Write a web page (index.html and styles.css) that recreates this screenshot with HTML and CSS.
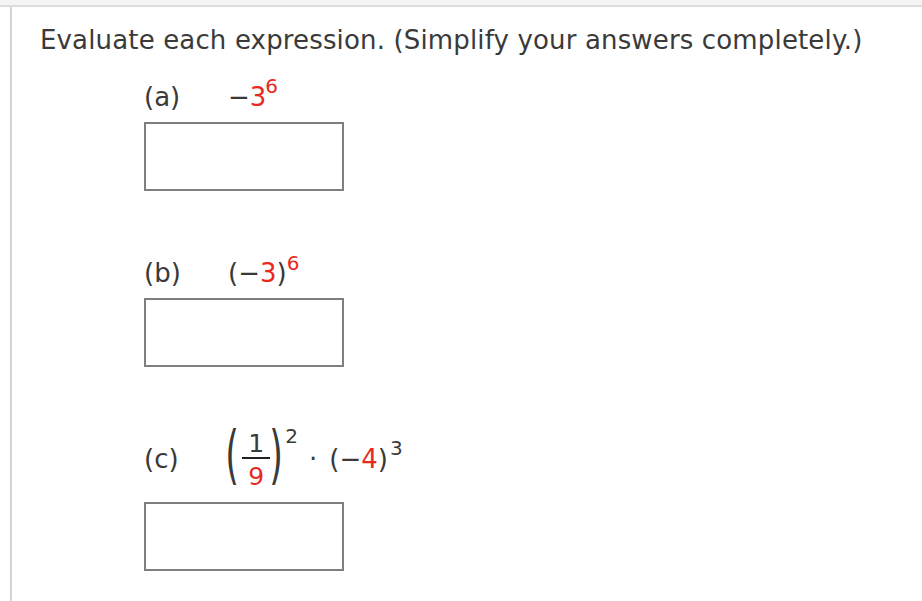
FILE: index.html
```html
<!DOCTYPE html>
<html lang="en">
<head>
<meta charset="utf-8">
<title>Evaluate each expression</title>
<link rel="stylesheet" href="styles.css">
</head>
<body>
<div class="topbar"></div>
<div class="panel">
  <p class="question">Evaluate each expression. (Simplify your answers completely.)</p>

  <div class="part part-a">
    <div class="prompt">
      <span class="label">(a)</span>
      <span class="expr">&minus;<span class="red">3</span><sup class="red">6</sup></span>
    </div>
    <div class="answer"></div>
  </div>

  <div class="part part-b">
    <div class="prompt">
      <span class="label">(b)</span>
      <span class="expr">(&minus;<span class="red">3</span>)<sup class="red sup-b">6</sup></span>
    </div>
    <div class="answer"></div>
  </div>

  <div class="part part-c">
    <div class="prompt">
      <span class="label">(c)</span>
      <span class="expr"><span class="bigparen">(</span><span class="frac"><span class="num">1</span><span class="den red">9</span></span><span class="bigparen">)</span><sup class="sup-high">2</sup><span class="dot">&middot;</span>(&minus;<span class="red">4</span>)<sup class="sup-c">3</sup></span>
    </div>
    <div class="answer"></div>
  </div>
</div>
</body>
</html>
```

FILE: styles.css
```css
html, body {
  margin: 0;
  padding: 0;
  background: #ffffff;
}

body {
  font-family: "DejaVu Sans", Verdana, sans-serif;
  color: #3a3a3a;
  width: 922px;
  height: 601px;
  overflow: hidden;
}

.topbar {
  height: 5px;
  background: #f4f4f4;
  border-bottom: 2px solid #dddddd;
}

.panel {
  margin-left: 10px;
  border-left: 2px solid #d4d4d4;
  height: 594px;
  box-sizing: border-box;
  padding: 18px 0 0 28px;
}

.question {
  margin: 0;
  font-size: 26px;
  line-height: 30px;
  letter-spacing: 0.15px;
}

.part {
  margin-left: 104px;
}

.part-a {
  margin-top: 27px;
}

.part-b {
  margin-top: 67px;
}

.part-c {
  margin-top: 64px;
}

.prompt {
  display: flex;
  align-items: baseline;
  font-size: 26px;
  line-height: 30px;
  white-space: nowrap;
}

.label {
  width: 84px;
  flex: none;
}

.expr {
  display: inline-block;
}

.red {
  color: #e8291d;
}

sup {
  font-size: 20px;
  line-height: 0;
  vertical-align: 13.5px;
  margin-left: -1px;
}

.sup-b {
  vertical-align: 12.5px;
  margin-left: 0;
}

.answer {
  width: 200px;
  height: 69px;
  box-sizing: border-box;
  border: 2px solid #7f7f7f;
  margin-top: 10px;
  background: #ffffff;
}

.part-c .answer {
  margin-top: 13px;
}

.bigparen {
  display: inline-block;
  transform-origin: 50% 15.8px;
  transform: translateY(-3px) scale(1.35, 2.45);
}

.bigparen:first-child {
  margin-left: -1px;
}

.frac {
  display: inline-flex;
  flex-direction: column;
  align-items: stretch;
  vertical-align: 15.6px;
  font-size: 25px;
  line-height: 25px;
  margin: 0 1px 0 5px;
  width: 28px;
  text-align: center;
}

.frac .num {
  display: block;
  padding-bottom: 1px;
  border-bottom: 2px solid #222222;
}

.frac .den {
  display: block;
  padding-top: 5px;
}

.sup-high {
  vertical-align: 24.6px;
  margin-left: 4px;
}

.sup-c {
  vertical-align: 12.6px;
  margin-left: 2px;
}

.dot {
  margin: 0 12px 0 11px;
}
```
